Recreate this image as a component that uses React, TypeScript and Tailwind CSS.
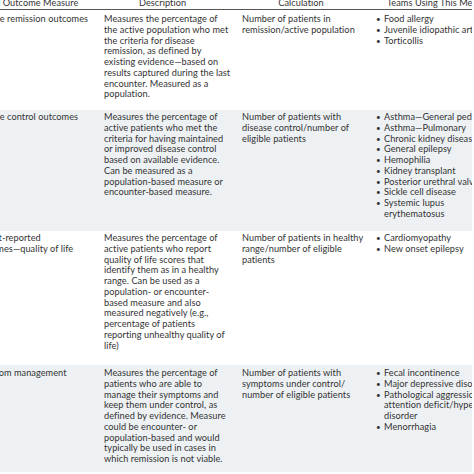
type Row = {
  measure: string[];
  description: string[];
  calculation: string[];
  teams: string[][];
  bg: string;
  height: string;
  pad: string;
};

const rows: Row[] = [
  {
    measure: ["Disease remission outcomes"],
    description: [
      "Measures the percentage of",
      "the active population who met",
      "the criteria for disease",
      "remission, as defined by",
      "existing evidence\u2014based on",
      "results captured during the last",
      "encounter. Measured as a",
      "population.",
    ],
    calculation: ["Number of patients in", "remission/active population"],
    teams: [["Food allergy"], ["Juvenile idiopathic arthritis"], ["Torticollis"]],
    bg: "bg-white",
    height: "h-[100px]",
    pad: "pt-[4px]",
  },
  {
    measure: ["Disease control outcomes"],
    description: [
      "Measures the percentage of",
      "active patients who met the",
      "criteria for having maintained",
      "or improved disease control",
      "based on available evidence.",
      "Can be measured as a",
      "population-based measure or",
      "encounter-based measure.",
    ],
    calculation: ["Number of patients with", "disease control/number of", "eligible patients"],
    teams: [
      ["Asthma\u2014General pediatrics"],
      ["Asthma\u2014Pulmonary"],
      ["Chronic kidney disease"],
      ["General epilepsy"],
      ["Hemophilia"],
      ["Kidney transplant"],
      ["Posterior urethral valves"],
      ["Sickle cell disease"],
      ["Systemic lupus", "erythematosus"],
    ],
    bg: "bg-[#eef1f3]",
    height: "h-[121px]",
    pad: "pt-[2px]",
  },
  {
    measure: ["Patient-reported", "outcomes\u2014quality of life"],
    description: [
      "Measures the percentage of",
      "active patients who report",
      "quality of life scores that",
      "identify them as in a healthy",
      "range. Can be used as a",
      "population- or encounter-",
      "based measure and also",
      "measured negatively (e.g.,",
      "percentage of patients",
      "reporting unhealthy quality of",
      "life)",
    ],
    calculation: ["Number of patients in healthy", "range/number of eligible", "patients"],
    teams: [["Cardiomyopathy"], ["New onset epilepsy"]],
    bg: "bg-white",
    height: "h-[134px]",
    pad: "pt-[2px]",
  },
  {
    measure: ["Symptom management"],
    description: [
      "Measures the percentage of",
      "patients who are able to",
      "manage their symptoms and",
      "keep them under control, as",
      "defined by evidence. Measure",
      "could be encounter- or",
      "population-based and would",
      "typically be used in cases in",
      "which remission is not viable.",
    ],
    calculation: ["Number of patients with", "symptoms under control/", "number of eligible patients"],
    teams: [
      ["Fecal incontinence"],
      ["Major depressive disorder"],
      ["Pathological aggression with", "attention deficit/hyperactivity", "disorder"],
      ["Menorrhagia"],
    ],
    bg: "bg-[#eef1f3]",
    height: "h-[107px]",
    pad: "pt-[3px]",
  },
];

const cols = "grid grid-cols-[130px_137px_134px_150px]";

function Lines({ lines }: { lines: string[] }) {
  return (
    <>
      {lines.map((l, i) => (
        <span key={i} className="block whitespace-nowrap">
          {l}
        </span>
      ))}
    </>
  );
}

export default function App() {
  return (
    <div className="w-[474px] h-[474px] bg-white">
      <div className="w-[472px] h-[472px] overflow-hidden">
        <div
          className="ml-[-29px] mt-[-3px] w-[551px] text-[#333] text-[9.2px] leading-[10.75px] tracking-[0.05px]"
          style={{ fontFamily: "Lato, 'Noto Sans', sans-serif" }}
        >
          {/* Header */}
          <div className={`${cols} border-b border-[#555] h-[13px] pt-[1px]`}>
            <div className="whitespace-nowrap">Clinical Outcome Measure</div>
            <div className="pr-[14px] text-center whitespace-nowrap">Description</div>
            <div className="pr-[8px] text-center whitespace-nowrap">Calculation</div>
            <div className="pl-[15px] whitespace-nowrap">Teams Using This Measure</div>
          </div>

          {rows.map((r, i) => (
            <div key={i} className={`${cols} ${r.bg} ${r.height} ${r.pad}`}>
              <div className="pl-[2px] pr-[4px]">
                <Lines lines={r.measure} />
              </div>
              <div className="pl-[3px] pr-[4px]">
                <Lines lines={r.description} />
              </div>
              <div className="pl-[4px]">
                <Lines lines={r.calculation} />
              </div>
              <ul className="pl-[4px]">
                {r.teams.map((t, j) => (
                  <li key={j} className="flex">
                    <span className="w-[8px] shrink-0 text-[8px]">&bull;</span>
                    <span>
                      <Lines lines={t} />
                    </span>
                  </li>
                ))}
              </ul>
            </div>
          ))}
        </div>
      </div>
    </div>
  );
}
